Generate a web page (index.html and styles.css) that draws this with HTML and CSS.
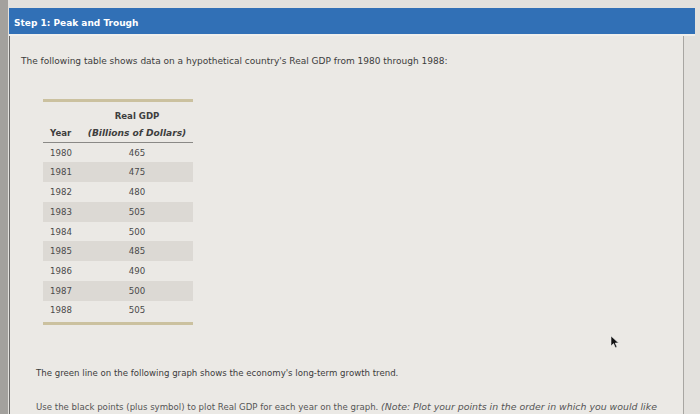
FILE: index.html
```html
<!DOCTYPE html>
<html lang="en">
<head>
    <meta charset="UTF-8">
    <meta name="viewport" content="width=device-width, initial-scale=1.0">
    <title>Step 1: Peak and Trough</title>
    <link rel="stylesheet" href="styles.css">
</head>
<body>
    <div class="screen">
        <div class="step-header">
            <h1 class="step-title">Step 1: Peak and Trough</h1>
        </div>

        <div class="panel">
            <p class="intro">The following table shows data on a hypothetical country's Real GDP from 1980 through 1988:</p>

            <table class="gdp-table">
                <thead>
                    <tr class="title-row">
                        <th></th>
                        <th class="col-value">Real GDP</th>
                    </tr>
                    <tr class="head-row">
                        <th class="col-year">Year</th>
                        <th class="col-value"><em>(Billions of Dollars)</em></th>
                    </tr>
                </thead>
                <tbody>
                    <tr><td class="col-year">1980</td><td class="col-value">465</td></tr>
                    <tr class="shade"><td class="col-year">1981</td><td class="col-value">475</td></tr>
                    <tr><td class="col-year">1982</td><td class="col-value">480</td></tr>
                    <tr class="shade"><td class="col-year">1983</td><td class="col-value">505</td></tr>
                    <tr><td class="col-year">1984</td><td class="col-value">500</td></tr>
                    <tr class="shade"><td class="col-year">1985</td><td class="col-value">485</td></tr>
                    <tr><td class="col-year">1986</td><td class="col-value">490</td></tr>
                    <tr class="shade"><td class="col-year">1987</td><td class="col-value">500</td></tr>
                    <tr class="last"><td class="col-year">1988</td><td class="col-value">505</td></tr>
                </tbody>
            </table>

            <p class="graph-note">The green line on the following graph shows the economy's long-term growth trend.</p>

            <p class="instructions">Use the black points (plus symbol) to plot Real GDP for each year on the graph. <em>(Note: Plot your points in the order in which you would like</em></p>

            <!-- puntero del ratón -->
            <svg class="cursor" width="10" height="14" viewBox="0 0 10 14">
                <path d="M1 1 L1 11 L3.5 8.6 L5.4 12.8 L7 12 L5.2 8 L8.6 8 Z" fill="#111" stroke="#eee" stroke-width="0.6"/>
            </svg>
        </div>
    </div>
</body>
</html>
```

FILE: styles.css
```css
* {
    margin: 0;
    padding: 0;
    box-sizing: border-box;
}

body {
    font-family: 'DejaVu Sans', Verdana, sans-serif;
    background: #dedcd8;
    color: #3a3a3a;
    height: 414px;
    overflow: hidden;
}

.screen {
    height: 414px;
    padding-top: 8px;
    border-left: 8px solid #a3a19d;
    background: #e3e1dd;
}

.step-header {
    margin-left: 1px;
    width: 686px;
    height: 28px;
    background: #3170b6;
    display: flex;
    align-items: center;
    padding: 3px 0 0 5px;
    border-bottom: 2px solid #f0efec;
}

.step-title {
    font-size: 9px;
    font-weight: bold;
    color: #fff;
}

.panel {
    position: relative;
    margin-left: 1px;
    width: 675px;
    height: 380px;
    background: #ebe9e5;
    border-left: 1px solid #6b6a68;
    border-right: 1px solid #a8a6a2;
    padding: 20px 0 0 11px;
}

.intro {
    font-size: 9px;
    color: #3c3c3c;
}

.gdp-table {
    margin: 33px 0 0 22px;
    border-collapse: collapse;
    border-top: 3px solid #cbc19f;
    border-bottom: 3px solid #cbc19f;
    width: 150px;
    font-size: 8.6px;
}

.gdp-table th {
    font-weight: bold;
    color: #3e3e3e;
    white-space: nowrap;
}

.gdp-table .title-row th {
    height: 22px;
    vertical-align: bottom;
    padding-bottom: 2px;
}

.gdp-table .head-row th {
    height: 20px;
    padding-top: 2px;
    border-bottom: 1px solid #8a8986;
}

.gdp-table .head-row em {
    font-size: 9.1px;
}

.gdp-table td {
    height: 19.8px;
    color: #4a4a4a;
}

.gdp-table .last td {
    height: 23px;
    padding-bottom: 3px;
}

.gdp-table .shade td {
    background: #dcd9d4;
}

.col-year {
    text-align: left;
    padding-left: 7px;
    width: 38px;
}

.col-value {
    text-align: center;
}

.graph-note {
    font-size: 8.6px;
    color: #3c3c3c;
    margin: 43px 0 0 15px;
}

.instructions {
    font-size: 8.6px;
    color: #555;
    margin: 23px 0 0 15px;
    white-space: nowrap;
}

.instructions em {
    font-size: 9.4px;
}

.cursor {
    position: absolute;
    left: 600px;
    top: 299px;
}
```
